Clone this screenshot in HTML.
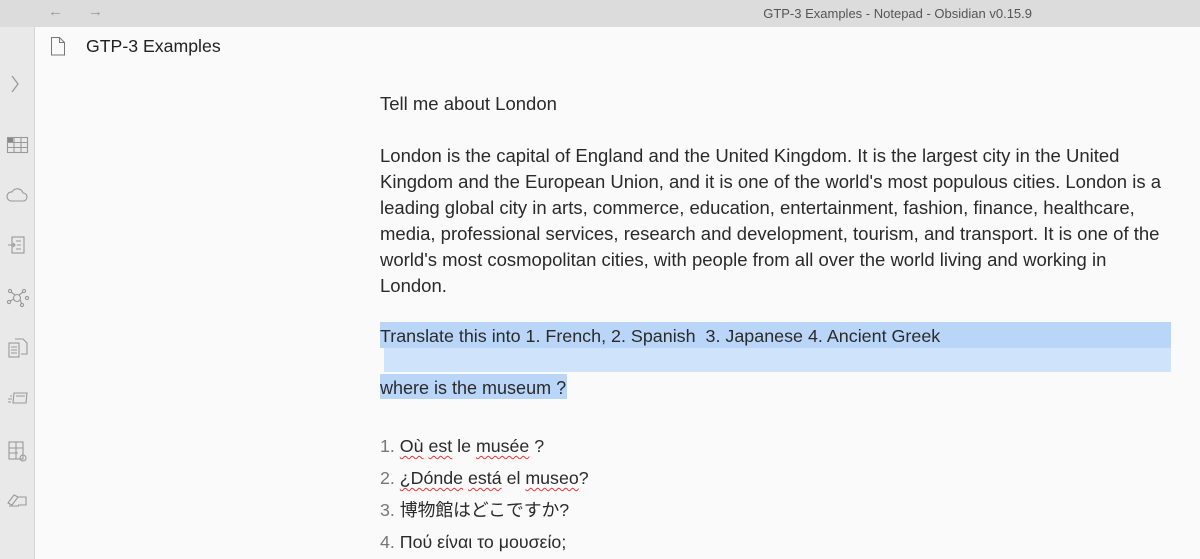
<!DOCTYPE html>
<html><head><meta charset="utf-8"><style>
body{margin:0;width:1200px;height:559px;overflow:hidden;background:#fafafa;font-family:"Liberation Sans","Noto Sans CJK JP",sans-serif;color:#2a2a2a;position:relative}
.top{position:absolute;left:0;top:0;width:1200px;height:27px;background:#dcdcdc}
.top .t{position:absolute;right:168px;top:6px;font-size:13px;color:#555}
.rib{position:absolute;left:0;top:27px;width:34px;height:532px;background:#e9e9e9;border-right:1px solid #d4d4d4}
.l{position:absolute;left:380px;font-size:18.5px;white-space:nowrap;line-height:26px}
.sel{position:absolute;background:#cfe3fb}
.sel2{position:absolute;background:#b9d6f8}
.n{color:#777}
.sq{text-decoration:underline wavy #e33;text-decoration-thickness:1px;text-underline-offset:3px}
svg{position:absolute}
</style></head><body>
<div class="top"><span style="position:absolute;left:48px;top:3px;color:#999;font-size:15px">←</span><span style="position:absolute;left:88px;top:3px;color:#999;font-size:15px">→</span><span class="t">GTP-3 Examples - Notepad - Obsidian v0.15.9</span></div>
<div class="rib"></div>
<svg width="34" height="559" viewBox="0 0 34 559" fill="none" stroke="#999" stroke-width="1.1">
<path d="M12 76l6 8-6 8" stroke-width="1.3"/>
<rect x="7.5" y="137.5" width="20" height="15"/><path d="M7.5 142.5h20M7.5 147.5h20M14 137.5v15M21 137.5v15"/><rect x="8" y="138" width="5" height="4" fill="#888" stroke="none"/>
<path d="M11 201h12a4 4 0 0 0 0-8 6 6 0 0 0-11-1 4.5 4.5 0 0 0-1 9z"/>
<rect x="12" y="237" width="12" height="16"/><path d="M8 245h7m-2-2l2 2-2 2M16 241h5M17 245h4M16 249h5"/>
<circle cx="17" cy="298" r="3.5"/><circle cx="10" cy="291" r="1.6"/><circle cx="24" cy="291" r="1.6"/><circle cx="9" cy="302" r="1.6"/><circle cx="22" cy="305" r="1.6"/><circle cx="27" cy="298" r="1.6"/><path d="M11 292l4 3M23 292l-4 3M10 301l4-2M20 300l2 4"/>
<rect x="9" y="343" width="10" height="14"/><path d="M15 339h8l4 4v11h-6M11 347h6M11 350h6M11 353h6"/>
<path d="M14 393h13l-1 10H13z M12 396h-2M12 399h-4M11 402h-3M16 396h9"/>
<rect x="9" y="442" width="14" height="17"/><path d="M9 448h14M9 453h9M16 442v17"/><circle cx="23" cy="458" r="3"/>
<path d="M8 503l6-8 4 2-6 8zM18 497h8v8h-8M9 506h10"/>
</svg>
<svg width="16" height="20" style="left:50px;top:36px" fill="none" stroke="#777" stroke-width="1"><path d="M1.5 1.5h8l5 5v12.5h-13z M9.5 1.5v5h5"/></svg>
<div style="position:absolute;left:86px;top:36px;font-size:17.7px;color:#222">GTP-3 Examples</div>
<div class="sel2" style="left:380px;top:322px;width:791px;height:26px"></div>
<div class="sel" style="left:384px;top:348px;width:787px;height:24px"></div>
<div class="sel2" style="left:380px;top:374px;width:187px;height:25px"></div>
<div class="l" style="top:91px">Tell me about London</div>
<div class="l" style="top:143px">London is the capital of England and the United Kingdom. It is the largest city in the United</div>
<div class="l" style="top:169px">Kingdom and the European Union, and it is one of the world's most populous cities. London is a</div>
<div class="l" style="top:195px">leading global city in arts, commerce, education, entertainment, fashion, finance, healthcare,</div>
<div class="l" style="top:221px">media, professional services, research and development, tourism, and transport. It is one of the</div>
<div class="l" style="top:247px">world's most cosmopolitan cities, with people from all over the world living and working in</div>
<div class="l" style="top:273px">London.</div>
<div class="l" style="top:323px;font-size:17.9px">Translate this into 1. French, 2. Spanish&nbsp; 3. Japanese 4. Ancient Greek</div>
<div class="l" style="top:375px;font-size:18px">where is the museum ?</div>
<div class="l" style="top:433px;font-size:17.8px"><span class="n">1.</span> <span class="sq">Où</span> <span class="sq">est</span> le <span class="sq">musée</span> ?</div>
<div class="l" style="top:465px;font-size:17.8px"><span class="n">2.</span> <span class="sq">¿Dónde</span> <span class="sq">está</span> el <span class="sq">museo</span>?</div>
<div class="l" style="top:497px;font-size:17.8px"><span class="n">3.</span> 博物館はどこですか?</div>
<div class="l" style="top:529px;font-size:17.8px"><span class="n">4.</span> Πού είναι το μουσείο;</div>
</body></html>
